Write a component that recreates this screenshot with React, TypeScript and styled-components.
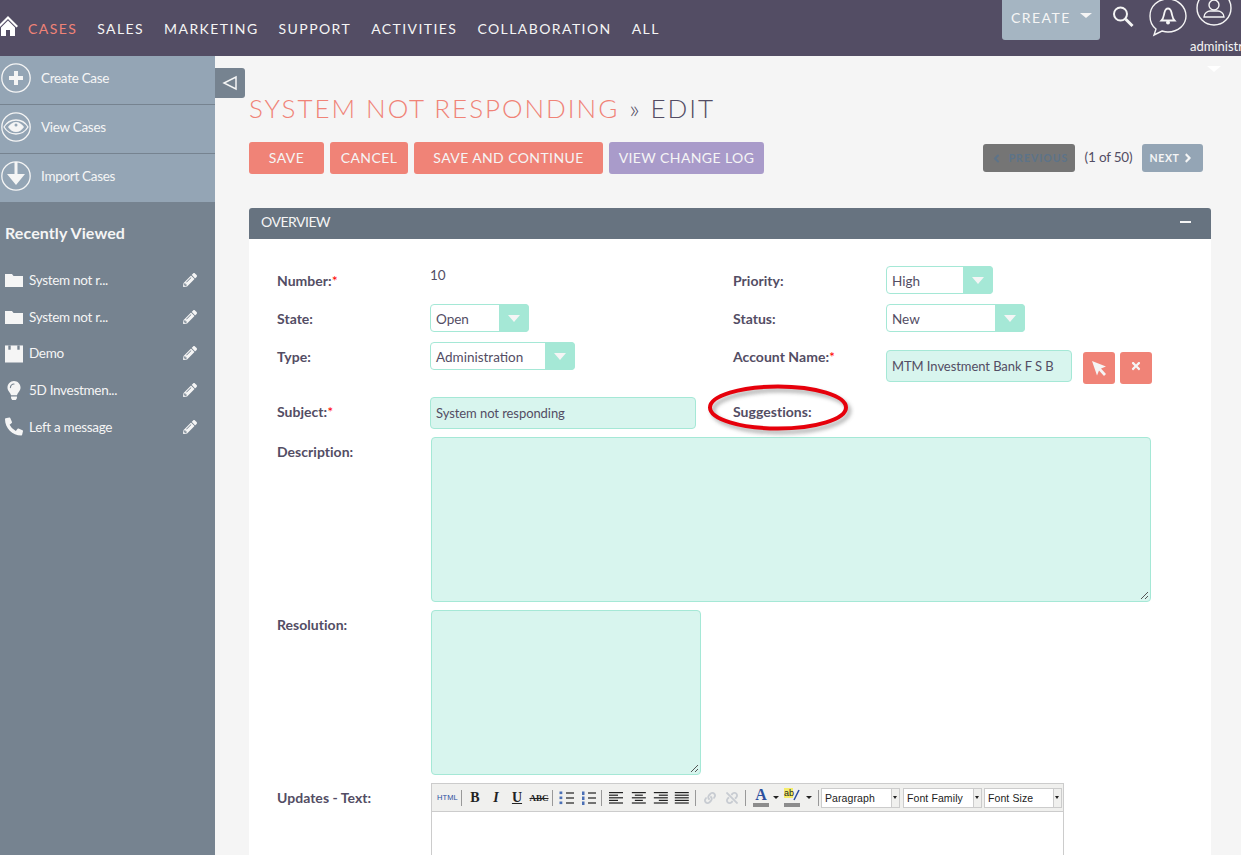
import React from 'react';
import styled, { createGlobalStyle } from 'styled-components';
import { FaPencilAlt, FaPhoneAlt, FaLightbulb, FaTimes, FaAngleLeft, FaAngleRight, FaLink, FaUnlink } from 'react-icons/fa';

const GlobalStyle = createGlobalStyle`
	html, body {
		margin: 0;
		height: 100%;
		overflow: hidden;
		background: #f5f5f5;
		font-family: Lato, 'Liberation Sans', sans-serif;
		color: #534d64;
	}
	* { box-sizing: border-box; }
`;

const Page = styled.div`
	position: relative;
	width: 1241px;
	height: 855px;
	overflow: hidden;
`;

const Header = styled.header`
	display: flex;
	height: 56px;
	background: #534d64;
	overflow: hidden;
`;

const HomeLink = styled.div`
	display: flex;
	align-items: center;
	flex: none;
	margin-left: -2px;
	width: 30px;
	height: 56px;
	padding-bottom: 4px;
`;

const Nav = styled.nav`
	display: flex;
	align-items: center;
	gap: 20px;
	flex: 1;
`;

const NavItem = styled.span<{ $active?: boolean }>`
	font-size: 14px;
	letter-spacing: 1.42px;
	line-height: 56px;
	padding-top: 1px;
	color: ${({ $active }) => ($active ? '#f08377' : '#f5f5f5')};
`;

const CreateButton = styled.div`
	display: flex;
	align-items: center;
	gap: 9px;
	width: 98px;
	height: 40px;
	margin-right: 12px;
	padding: 0 0 6px 9px;
	border-radius: 0 0 3px 3px;
	background: #a5b5c2;
	color: #f5f5f5;
	font-size: 14px;
	letter-spacing: 1.45px;
`;

const Caret = styled.i`
	width: 0;
	height: 0;
	border-left: 6px solid transparent;
	border-right: 6px solid transparent;
	border-top: 5px solid #f5f5f5;
	margin-bottom: 3px;
`;

const HeaderIcon = styled.svg<{ $w: number; $h: number; $mr: number }>`
	flex: none;
	width: ${({ $w }) => $w}px;
	height: ${({ $h }) => $h}px;
	margin-right: ${({ $mr }) => $mr}px;
`;

const UserBlock = styled.div`
	display: flex;
	flex-direction: column;
	flex: none;
	width: 45px;
	white-space: nowrap;
	color: #f5f5f5;
	font-size: 13px;
`;

const UserName = styled.span`
	margin: 10px 0 0 -6px;
	line-height: 16px;
`;

const UserCaret = styled.i`
	position: absolute;
	left: 1207px;
	top: 66px;
	width: 0;
	height: 0;
	border-left: 7px solid transparent;
	border-right: 7px solid transparent;
	border-top: 6px solid #fff;
`;

const Body = styled.div`
	display: flex;
	height: 799px;
`;

const Sidebar = styled.aside`
	flex: none;
	width: 215px;
	background: #768390;
	color: #f5f5f5;
`;

const Actions = styled.div`
	display: flex;
	flex-direction: column;
	height: 146px;
	background: #94a5b5;
`;

const ActionRow = styled.div`
	display: flex;
	align-items: center;
	flex: 1;
	padding: 0 0 4px 1px;
	gap: 10px;
	font-size: 13.5px;
	letter-spacing: -0.3px;
	border-bottom: 1px solid #768390;

	&:last-child {
		border-bottom: 0;
	}
`;

const ActionIcon = styled.svg`
	flex: none;
	width: 30px;
	height: 30px;
`;

const RecentTitle = styled.h3`
	margin: 0;
	padding: 21px 0 0 5px;
	height: 59.5px;
	font-size: 16px;
	line-height: 20px;
	font-weight: 700;
	letter-spacing: 0.1px;
`;

const RecentRow = styled.div`
	display: flex;
	align-items: center;
	height: 36.75px;
	padding: 0 18px 0 5px;
	font-size: 13.5px;
	letter-spacing: -0.3px;
`;

const RecentIcon = styled.span`
	display: flex;
	align-items: center;
	justify-content: center;
	width: 18px;
	margin-right: 6px;
	font-size: 19px;
`;

const RecentLabel = styled.span`
	flex: 1;
`;

const EditIcon = styled(FaPencilAlt)`
	font-size: 14px;
`;

const Main = styled.main`
	flex: 1;
	padding: 0 30px 0 34px;
`;

const CollapseTab = styled.div`
	position: absolute;
	left: 215px;
	top: 68px;
	display: flex;
	align-items: center;
	justify-content: center;
	width: 30px;
	height: 30px;
	border-radius: 0 3px 3px 0;
	background: #768390;
`;

const Title = styled.h1`
	margin: 0;
	padding-top: 36px;
	height: 86px;
	font-size: 26px;
	line-height: 32px;
	font-weight: 300;
	letter-spacing: 1.96px;
	color: #f08377;
	white-space: nowrap;
`;

const TitleRest = styled.span`
	margin-left: 1px;
	color: #534d64;
`;

const ButtonBar = styled.div`
	display: flex;
	align-items: center;
	gap: 6px;
	height: 32px;
	margin-bottom: 34px;
`;

const ActionButton = styled.div<{ $w: number; $purple?: boolean }>`
	display: flex;
	align-items: center;
	justify-content: center;
	width: ${({ $w }) => $w}px;
	height: 32px;
	padding-bottom: 2px;
	border-radius: 3px;
	background: ${({ $purple }) => ($purple ? '#a99bca' : '#f08377')};
	color: #f5f5f5;
	font-size: 14px;
	letter-spacing: 0.4px;
`;

const Pager = styled.div`
	display: flex;
	align-items: center;
	margin-left: auto;
	margin-right: 8px;
`;

const PagerButton = styled.div<{ $disabled?: boolean }>`
	display: flex;
	align-items: center;
	justify-content: center;
	gap: ${({ $disabled }) => ($disabled ? '6px' : '2px')};
	width: ${({ $disabled }) => ($disabled ? '92px' : '61px')};
	height: 28px;
	border-radius: 3px;
	background: ${({ $disabled }) => ($disabled ? '#757575' : '#94a5b5')};
	color: ${({ $disabled }) => ($disabled ? '#5c7389' : '#f5f5f5')};
	font-size: 10.5px;
	font-weight: 700;
	letter-spacing: ${({ $disabled }) => ($disabled ? '1px' : '0.6px')};
`;

const PagerText = styled.span`
	width: 67px;
	text-align: center;
	font-size: 13.5px;
	letter-spacing: -0.2px;
	padding-bottom: 2px;
`;

const Panel = styled.section`
	width: 962px;
	background: #fff;
	height: 650px;
	border-radius: 3px 3px 0 0;
`;

const PanelHead = styled.div`
	display: flex;
	align-items: center;
	justify-content: space-between;
	height: 31px;
	padding: 0 20px 4px 12px;
	border-radius: 3px 3px 0 0;
	background: #677380;
	color: #f5f5f5;
	font-size: 14px;
	letter-spacing: -0.5px;
`;

const Minus = styled.i`
	width: 11px;
	height: 2px;
	background: #f5f5f5;
`;

const Form = styled.div`
	padding: 27px 0 0 28px;
`;

const Row = styled.div<{ $h: number }>`
	display: grid;
	grid-template-columns: 153px 303px 153px 1fr;
	height: ${({ $h }) => $h}px;
`;

const Label = styled.div`
	padding-top: 6px;
	font-size: 14px;
	line-height: 18px;
	font-weight: 700;
	letter-spacing: 0.03px;
	color: #534d64;
`;

const Req = styled.span`
	color: #f00;
	font-weight: 400;
`;

const Plain = styled.div`
	font-size: 13.5px;
	line-height: 18px;
`;

const SelectBox = styled.div<{ $w: number }>`
	position: relative;
	display: flex;
	align-items: center;
	width: ${({ $w }) => $w}px;
	height: 28px;
	padding: 1px 0 0 5px;
	border: 1px solid #a5e8d6;
	border-radius: 4px;
	background: #fff;
	font-size: 13.5px;
	color: #534d64;
`;

const SelectArrow = styled.span`
	position: absolute;
	right: -1px;
	top: -1px;
	display: flex;
	align-items: center;
	justify-content: center;
	width: 30px;
	height: 28px;
	border-radius: 0 4px 4px 0;
	background: #a5e8d6;
`;

const ArrowDown = styled.i`
	width: 0;
	height: 0;
	border-left: 6px solid transparent;
	border-right: 6px solid transparent;
	border-top: 7px solid #f5f5f5;
`;

const TextField = styled.div<{ $w: number }>`
	display: flex;
	align-items: center;
	flex: none;
	width: ${({ $w }) => $w}px;
	height: 32px;
	padding-left: 5px;
	border: 1px solid #a5e8d6;
	border-radius: 4px;
	background: #d8f5ee;
	font-size: 13px;
	letter-spacing: -0.07px;
	color: #534d64;
`;

const AccountCell = styled.div`
	display: flex;
	align-items: flex-start;
	gap: 5px;
	margin-top: 8px;
`;

const SquareButton = styled.div`
	display: flex;
	align-items: center;
	justify-content: center;
	flex: none;
	width: 32px;
	height: 32px;
	margin-top: 2px;
	padding-bottom: 4px;
	border-radius: 3px;
	background: #f08377;
	color: #f5f5f5;
	font-size: 12px;

	&:nth-child(2) {
		margin-left: 6px;
		padding-bottom: 0;
	}
`;

const WideCell = styled.div`
	grid-column: 2 / 5;
	padding-left: 1px;
`;

const TextArea = styled.div<{ $w: number }>`
	position: relative;
	width: ${({ $w }) => $w}px;
	height: 165px;
	border: 1px solid #a5e8d6;
	border-radius: 4px;
	background: #d8f5ee;
`;

const Grip = styled.svg`
	position: absolute;
	right: 1px;
	bottom: 1px;
	width: 9px;
	height: 9px;
`;

const Editor = styled.div`
	width: 633px;
	height: 80px;
	border: 1px solid #ccc;
	background: #fff;
`;

const Toolbar = styled.div`
	display: flex;
	align-items: center;
	height: 28px;
	border-bottom: 1px solid #ccc;
	background: #f0f0ee;
	color: #222;
`;

const ToolGlyph = styled.span<{ $w: number; $italic?: boolean; $under?: boolean; $strike?: boolean; $small?: boolean }>`
	display: flex;
	align-items: center;
	justify-content: center;
	flex: none;
	width: ${({ $w }) => $w}px;
	height: 20px;
	font-family: 'Liberation Serif', serif;
	font-size: ${({ $small }) => ($small ? '9px' : '14px')};
	font-weight: 700;
	font-style: ${({ $italic }) => ($italic ? 'italic' : 'normal')};
	text-decoration: ${({ $under, $strike }) => ($under ? 'underline' : $strike ? 'line-through' : 'none')};
`;

const HtmlGlyph = styled.span`
	flex: none;
	width: 27px;
	padding-left: 5px;
	font-family: 'Liberation Sans', sans-serif;
	font-size: 7.5px;
	letter-spacing: 0.1px;
	color: #2b4f9e;
`;

const Sep = styled.i`
	flex: none;
	width: 1px;
	height: 16px;
	margin: 0 2px;
	background: #999;
`;

const ToolIcon = styled.svg<{ $w: number }>`
	flex: none;
	width: ${({ $w }) => $w}px;
	height: 20px;
`;

const DimIcon = styled.span<{ $w: number }>`
	display: flex;
	align-items: center;
	justify-content: center;
	flex: none;
	width: ${({ $w }) => $w}px;
	color: #c8ccd2;
	font-size: 12px;
`;

const ColorGlyph = styled.span`
	display: flex;
	flex-direction: column;
	align-items: center;
	flex: none;
	width: 16px;
	margin-left: 5px;
	font-family: 'Liberation Serif', serif;
	font-size: 16px;
	line-height: 14px;
	font-weight: 700;
	color: #2b4f9e;
`;

const HighlightGlyph = styled.span`
	display: flex;
	flex-direction: column;
	flex: none;
	width: 16px;
	margin-left: 1px;
`;

const HighlightTop = styled.span`
	display: flex;
	height: 14px;
`;

const HighlightText = styled.span`
	width: 9px;
	height: 10px;
	background: #f4ec6a;
	font-family: 'Liberation Sans', sans-serif;
	font-size: 9px;
	line-height: 10px;
	color: #222;
`;

const PenIcon = styled.svg`
	width: 7px;
	height: 13px;
`;

const ColorBar = styled.i`
	width: 100%;
	height: 4px;
	margin-top: 1px;
	background: #8c8c8c;
`;

const SmallCaret = styled.i<{ $ml: number; $mr: number }>`
	flex: none;
	width: 0;
	height: 0;
	margin: 0 ${({ $mr }) => $mr}px 0 ${({ $ml }) => $ml}px;
	border-left: 3px solid transparent;
	border-right: 3px solid transparent;
	border-top: 3px solid #222;
`;

const ToolSelect = styled.div<{ $w: number; $mr: number }>`
	display: flex;
	align-items: center;
	flex: none;
	width: ${({ $w }) => $w}px;
	height: 20px;
	margin-right: ${({ $mr }) => $mr}px;
	padding-left: 3px;
	border: 1px solid #ccc;
	background: #fff;
	font-size: 10.5px;
	font-family: 'Liberation Sans', sans-serif;
	letter-spacing: 0.1px;
	white-space: nowrap;
	color: #222;
`;

const ToolSelectArrow = styled.span`
	display: flex;
	align-items: center;
	justify-content: center;
	margin-left: auto;
	width: 8px;
	height: 18px;
	background: #f0f0ee;
	border-left: 1px solid #ccc;
`;

const TinyCaret = styled.i`
	width: 0;
	height: 0;
	border-left: 2.5px solid transparent;
	border-right: 2.5px solid transparent;
	border-top: 3px solid #222;
`;

const Annotation = styled.svg`
	position: absolute;
	left: 700px;
	top: 378px;
	width: 165px;
	height: 66px;
`;

function Select({ value, w }: { value: string; w: number }) {
	return (
		<SelectBox $w={w}>
			{value}
			<SelectArrow>
				<ArrowDown />
			</SelectArrow>
		</SelectBox>
	);
}

function Lines({ rows, w }: { rows: [number, number][]; w: number }) {
	return (
		<ToolIcon $w={w} viewBox="0 0 20 20">
			{rows.map(([x, len], i) => (
				<rect key={i} x={x} y={4 + i * 2.6} width={len} height="1.2" fill="#222" />
			))}
		</ToolIcon>
	);
}

function ListIcon({ numbered, w }: { numbered?: boolean; w: number }) {
	return (
		<ToolIcon $w={w} viewBox="0 0 20 20">
			{[5, 10, 15].map((y) => (
				<React.Fragment key={y}>
					<rect x={numbered ? 3 : 2.5} y={y - 1.5} width={numbered ? 2.5 : 2.8} height={numbered ? 3.5 : 2.6} fill="#4a6fb5" />
					<rect x="9" y={y - 0.6} width="8" height="1.2" fill="#222" />
				</React.Fragment>
			))}
		</ToolIcon>
	);
}

function FolderIcon() {
	return (
		<svg width="18" height="14" viewBox="0 0 18 14">
			<path d="M0 1h7l1.500 2H18v11H0z" fill="#f5f5f5" />
		</svg>
	);
}

const recent = [
	{ icon: <FolderIcon />, label: 'System not r...' },
	{ icon: <FolderIcon />, label: 'System not r...' },
	{
		icon: (
			<svg width="19" height="19" viewBox="0 0 19 19">
				<rect y="1" width="19" height="18" fill="#f5f5f5" />
				<rect x="3.500" y="1" width="2.500" height="4.500" fill="#768390" />
				<rect x="13" y="1" width="2.500" height="4.500" fill="#768390" />
			</svg>
		),
		label: 'Demo'
	},
	{ icon: <FaLightbulb />, label: '5D Investmen...' },
	{ icon: <FaPhoneAlt />, label: 'Left a message' }
];

const navItems = ['SALES', 'MARKETING', 'SUPPORT', 'ACTIVITIES', 'COLLABORATION', 'ALL'];

export default function App() {
	return (
		<Page>
			<GlobalStyle />
			<Header>
				<HomeLink>
					<svg width="20" height="20" viewBox="0 0 20 20" fill="#fff">
						<path d="M10 0l10 10-1.500 1.500L10 3 1.500 11.500 0 10z" />
						<path d="M3 11.500L10 4.500l7 7V20h-5v-6H8v6H3z" />
					</svg>
				</HomeLink>
				<Nav>
					<NavItem $active>CASES</NavItem>
					{navItems.map((n) => (
						<NavItem key={n}>{n}</NavItem>
					))}
				</Nav>
				<CreateButton>
					CREATE <Caret />
				</CreateButton>
				<HeaderIcon $w={22} $h={30} $mr={15} viewBox="0 0 22 30" fill="none" stroke="#f5f5f5">
					<circle cx="8.500" cy="14" r="6.500" strokeWidth="2" />
					<path d="M13.500 19l7 7" strokeWidth="3" />
				</HeaderIcon>
				<HeaderIcon $w={38} $h={38} $mr={9} viewBox="0 0 38 38" fill="none" stroke="#f5f5f5">
					<path d="M19 -1C9 -1 1 6 1 16c0 5 2 10 6 13l-2 6 8-4c2 .6 4 1 6 1 10 0 18-7 18-16S29-1 19-1z" strokeWidth="1.400" />
					<path d="M12.500 20.500c2-2 2-4 3-8 .6-2.500 2-4 3.500-4s2.900 1.500 3.500 4c1 4 1 6 3 8z" strokeWidth="1.800" />
					<circle cx="19" cy="22.500" r="2" fill="#f5f5f5" stroke="none" />
				</HeaderIcon>
				<UserBlock>
					<svg width="36" height="28" viewBox="0 0 36 28" fill="none" stroke="#f5f5f5">
						<circle cx="18" cy="8" r="17" strokeWidth="1.400" />
						<circle cx="18" cy="5" r="5" strokeWidth="1.400" />
						<path d="M8 17c0-4 4-6 6-6h8c2 0 6 2 6 6z" strokeWidth="1.400" />
					</svg>
					<UserName>administrator</UserName>
				</UserBlock>
			</Header>
			<UserCaret />
			<Body>
				<Sidebar>
					<Actions>
						<ActionRow>
							<ActionIcon viewBox="0 0 30 30">
								<circle cx="15" cy="15" r="14.200" fill="none" stroke="#f5f5f5" strokeWidth="1.300" />
								<path d="M13 8h4v5h5v4h-5v5h-4v-5H8v-4h5z" fill="#f5f5f5" />
							</ActionIcon>
							Create Case
						</ActionRow>
						<ActionRow>
							<ActionIcon viewBox="0 0 30 30">
								<circle cx="15" cy="15" r="14.200" fill="none" stroke="#f5f5f5" strokeWidth="1.300" />
								<path d="M3 15c3-5 7.500-7 12-7s9 2 12 7c-3 5-7.500 7-12 7s-9-2-12-7z" fill="none" stroke="#f5f5f5" strokeWidth="1.300" />
								<path d="M7 15c2-3 5-5 8-5s6 2 8 5c-2 3-5 5-8 5s-6-2-8-5z" fill="#f5f5f5" />
								<circle cx="15" cy="13" r="1.500" fill="#94a5b5" />
							</ActionIcon>
							View Cases
						</ActionRow>
						<ActionRow>
							<ActionIcon viewBox="0 0 30 30">
								<circle cx="15" cy="15" r="14.200" fill="none" stroke="#f5f5f5" strokeWidth="1.300" />
								<path d="M13.500 1h3v12H24l-9 11-9-11h7.500z" fill="#f5f5f5" />
							</ActionIcon>
							Import Cases
						</ActionRow>
					</Actions>
					<RecentTitle>Recently Viewed</RecentTitle>
					{recent.map((r, i) => (
						<RecentRow key={i}>
							<RecentIcon>{r.icon}</RecentIcon>
							<RecentLabel>{r.label}</RecentLabel>
							<EditIcon />
						</RecentRow>
					))}
				</Sidebar>
				<Main>
					<Title>
						SYSTEM NOT RESPONDING <TitleRest>» EDIT</TitleRest>
					</Title>
					<ButtonBar>
						<ActionButton $w={75}>SAVE</ActionButton>
						<ActionButton $w={78}>CANCEL</ActionButton>
						<ActionButton $w={189}>SAVE AND CONTINUE</ActionButton>
						<ActionButton $w={155} $purple>
							VIEW CHANGE LOG
						</ActionButton>
						<Pager>
							<PagerButton $disabled>
								<FaAngleLeft size={13} />
								PREVIOUS
							</PagerButton>
							<PagerText>(1 of 50)</PagerText>
							<PagerButton>
								NEXT
								<FaAngleRight size={14} />
							</PagerButton>
						</Pager>
					</ButtonBar>
					<Panel>
						<PanelHead>
							OVERVIEW
							<Minus />
						</PanelHead>
						<Form>
							<Row $h={38}>
								<Label>
									Number:<Req>*</Req>
								</Label>
								<Plain>10</Plain>
								<Label>Priority:</Label>
								<Select value="High" w={107} />
							</Row>
							<Row $h={38}>
								<Label>State:</Label>
								<Select value="Open" w={99} />
								<Label>Status:</Label>
								<Select value="New" w={139} />
							</Row>
							<Row $h={55}>
								<Label>Type:</Label>
								<Select value="Administration" w={145} />
								<Label>
									Account Name:<Req>*</Req>
								</Label>
								<AccountCell>
									<TextField $w={186}>MTM Investment Bank F S B</TextField>
									<SquareButton>
										<svg width="18" height="18" viewBox="0 0 18 18" fill="#f5f5f5">
											<path d="M2 2l14 5.500-5 2 5 5.500-2 2-5-5.500-2 5z" />
										</svg>
									</SquareButton>
									<SquareButton>
										<FaTimes />
									</SquareButton>
								</AccountCell>
							</Row>
							<Row $h={40}>
								<Label>
									Subject:<Req>*</Req>
								</Label>
								<TextField $w={266}>System not responding</TextField>
								<Label>Suggestions:</Label>
							</Row>
							<Row $h={173}>
								<Label>Description:</Label>
								<WideCell>
									<TextArea $w={720}>
										<Grip viewBox="0 0 9 9" stroke="#555" strokeWidth="1">
											<path d="M1 8l7-7M5 8l3-3" />
										</Grip>
									</TextArea>
								</WideCell>
							</Row>
							<Row $h={173}>
								<Label>Resolution:</Label>
								<WideCell>
									<TextArea $w={270}>
										<Grip viewBox="0 0 9 9" stroke="#555" strokeWidth="1">
											<path d="M1 8l7-7M5 8l3-3" />
										</Grip>
									</TextArea>
								</WideCell>
							</Row>
							<Row $h={80}>
								<Label>Updates - Text:</Label>
								<WideCell>
									<Editor>
										<Toolbar>
											<HtmlGlyph>HTML</HtmlGlyph>
											<Sep />
											<ToolGlyph $w={22}>B</ToolGlyph>
											<ToolGlyph $w={20} $italic>
												I
											</ToolGlyph>
											<ToolGlyph $w={22} $under>
												U
											</ToolGlyph>
											<ToolGlyph $w={22} $small $strike>
												ABC
											</ToolGlyph>
											<Sep />
											<ListIcon w={24} />
											<ListIcon w={20} numbered />
											<Sep />
											<Lines w={24} rows={[[3, 14], [3, 9], [3, 14], [3, 9], [3, 14]]} />
											<Lines w={21.7} rows={[[3, 14], [6, 8], [3, 14], [6, 8], [3, 14]]} />
											<Lines w={21.7} rows={[[3, 14], [8, 9], [3, 14], [8, 9], [3, 14]]} />
											<Lines w={21.600} rows={[[3, 14], [3, 14], [3, 14], [3, 14], [3, 14]]} />
											<Sep />
											<DimIcon $w={24}>
												<FaLink />
											</DimIcon>
											<DimIcon $w={21}>
												<FaUnlink />
											</DimIcon>
											<Sep />
											<ColorGlyph>
												A
												<ColorBar />
											</ColorGlyph>
											<SmallCaret $ml={4} $mr={4} />
											<HighlightGlyph>
												<HighlightTop>
													<HighlightText>ab</HighlightText>
													<PenIcon viewBox="0 0 7 13" fill="none" stroke="#2b4f9e" strokeWidth="1.500">
														<path d="M6 2L1 12" />
													</PenIcon>
												</HighlightTop>
												<ColorBar />
											</HighlightGlyph>
											<SmallCaret $ml={6} $mr={4} />
											<Sep />
											<ToolSelect $w={79} $mr={3}>
												Paragraph
												<ToolSelectArrow>
													<TinyCaret />
												</ToolSelectArrow>
											</ToolSelect>
											<ToolSelect $w={79} $mr={2}>
												Font Family
												<ToolSelectArrow>
													<TinyCaret />
												</ToolSelectArrow>
											</ToolSelect>
											<ToolSelect $w={78} $mr={0}>
												Font Size
												<ToolSelectArrow>
													<TinyCaret />
												</ToolSelectArrow>
											</ToolSelect>
										</Toolbar>
									</Editor>
								</WideCell>
							</Row>
						</Form>
					</Panel>
				</Main>
			</Body>
			<CollapseTab>
				<svg width="16" height="16" viewBox="0 0 16 16" fill="none" stroke="#f5f5f5" strokeWidth="1.500">
					<path d="M14 2v12L2 8z" />
				</svg>
			</CollapseTab>
			<Annotation viewBox="0 0 165 66" fill="none">
				<defs>
					<filter id="ringShadow" x="-10%" y="-20%" width="120%" height="150%">
						<feGaussianBlur stdDeviation="2" />
					</filter>
				</defs>
				<ellipse cx="81" cy="33" rx="68" ry="21" stroke="#555" strokeWidth="3.500" opacity="0.55" filter="url(#ringShadow)" />
				<ellipse cx="78" cy="29.500" rx="68" ry="21" stroke="#e6000b" strokeWidth="4" />
			</Annotation>
		</Page>
	);
}
